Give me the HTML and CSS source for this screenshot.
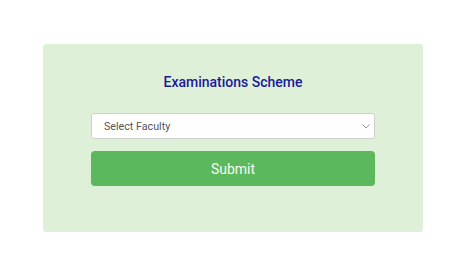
FILE: index.html
```html
<!DOCTYPE html>
<html>
<head>
<meta charset="utf-8">
<link rel="stylesheet" href="styles.css">
</head>
<body>
<div class="card">
  <h2 class="title">Examinations Scheme</h2>
  <div class="select-wrap">
    <select class="select">
      <option>Select Faculty</option>
    </select>
    <svg class="chev" width="8" height="5" viewBox="0 0 8 5"><path d="M0.5 0.5 L4 4 L7.5 0.5" fill="none" stroke="#999" stroke-width="1"/></svg>
  </div>
  <button class="submit">Submit</button>
</div>
</body>
</html>
```
FILE: styles.css
```css
html, body {
  margin: 0;
  padding: 0;
  background: #ffffff;
  font-family: Roboto, "Liberation Sans", sans-serif;
}
.card {
  margin: 44px 0 0 43px;
  width: 380px;
  box-sizing: border-box;
  padding: 29px 48px 46px;
  background: #dff0d8;
  border-radius: 3px;
  display: flex;
  flex-direction: column;
}
.title {
  margin: 0 0 21px;
  font-size: 14px;
  line-height: 19px;
  font-weight: 500;
  color: #1a1a9a;
  text-align: center;
}
.select-wrap {
  position: relative;
  height: 26px;
}
.select {
  appearance: none;
  -webkit-appearance: none;
  width: 100%;
  height: 26px;
  box-sizing: border-box;
  border: 1px solid #cfcfcf;
  border-radius: 3px;
  background: #ffffff;
  padding: 0 0 0 12px;
  font-family: Roboto, "Liberation Sans", sans-serif;
  font-size: 10.7px;
  color: #555555;
  outline: none;
}
.chev {
  position: absolute;
  right: 5px;
  top: 11px;
}
.submit {
  margin-top: 12px;
  height: 35px;
  border: none;
  border-radius: 4px;
  background: #5cb85c;
  color: #f4fbf2;
  font-family: Roboto, "Liberation Sans", sans-serif;
  font-size: 14px;
  padding: 0;
}
```
